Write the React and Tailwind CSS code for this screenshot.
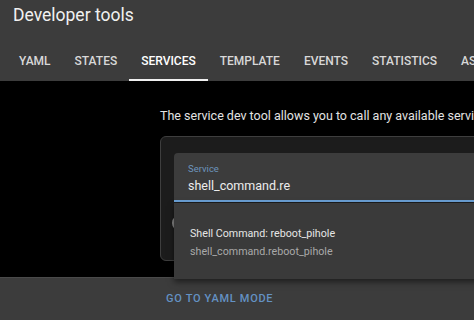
import React from "react";

const tabs = ["YAML", "STATES", "SERVICES", "TEMPLATE", "EVENTS", "STATISTICS", "ASSIST"];

export default function App() {
  return (
    <div
      className="w-[474px] h-[320px] overflow-hidden flex flex-col bg-black"
      style={{ fontFamily: "Roboto, 'Liberation Sans', sans-serif" }}
    >
      <header className="h-[81px] bg-[#3c3c3c] flex flex-col shrink-0">
        <div className="h-[33px] pl-[13px] pt-[1px] text-[17.5px] leading-[28px] text-[#f1f1f1]">
          Developer tools
        </div>
        <nav className="flex pl-[7px] mt-[9px] whitespace-nowrap">
          {tabs.map((t) => (
            <div
              key={t}
              className={
                "px-[12px] h-[39px] flex items-center text-[12px] font-medium shrink-0 border-b-2 " +
                (t === "SERVICES" ? "text-white border-[#f0f0f0]" : "text-[#d8d8d8] border-transparent")
              }
            >
              {t}
            </div>
          ))}
        </nav>
      </header>
      <main className="flex-1 bg-black pl-[160px] pt-[26px] relative">
        <p className="text-[12.5px] leading-[18px] text-[#e3e3e3] whitespace-nowrap">
          The service dev tool allows you to call any available service.
        </p>
        <div className="mt-[11px] w-[400px] h-[125px] rounded-[6px] border border-[#3e3e3e] bg-[#1c1c1c] relative pl-[13px] pt-[16px]">
          <div className="h-[49px] bg-[#3c3c3c] rounded-t-[4px] border-b-2 border-[#6a9fd4] pl-[14px] pt-[10px]">
            <div className="text-[9.5px] leading-[12px] text-[#6d94bd]">Service</div>
            <div className="text-[12.5px] leading-[20px] text-[#ececec] mt-[1px]">shell_command.re</div>
          </div>
          <div className="absolute left-[11px] top-[78px] w-[16px] h-[16px] rounded-full border-2 border-[#8a8a8a]" />
          <div className="absolute left-[13px] top-[66px] w-[400px] h-[76px] bg-[#3a3a3a] shadow-[0_3px_6px_rgba(0,0,0,0.5)] pl-[16px] pt-[23px] z-10">
            <div className="text-[10.7px] leading-[16px] text-[#e6e6e6]">Shell Command: reboot_pihole</div>
            <div className="text-[10.7px] leading-[16px] text-[#a9a9a9] mt-[2px]">shell_command.reboot_pihole</div>
          </div>
        </div>
      </main>
      <footer className="h-[43px] bg-[#3c3c3c] border-t border-[#4a4a4a] shrink-0 pl-[166px] flex items-center">
        <span className="text-[11px] font-medium tracking-[0.7px] text-[#6492c4]">GO TO YAML MODE</span>
      </footer>
    </div>
  );
}
